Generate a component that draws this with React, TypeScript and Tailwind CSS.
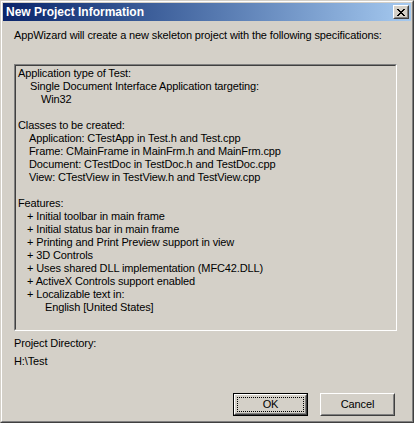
import React from "react";

const font = { fontFamily: '"Liberation Sans", Arial, sans-serif' };

function Btn({ label, isDefault }: { label: string; isDefault?: boolean }) {
  if (isDefault) {
    return (
      <div className="h-[23px] w-[75px] border border-black">
        <div className="h-full w-full border border-t-white border-l-white border-b-[#404040] border-r-[#404040]">
          <div className="flex h-full w-full items-center justify-center border border-t-[#d4d0c8] border-l-[#d4d0c8] border-b-[#808080] border-r-[#808080] p-[1px]">
            <div className="flex h-full w-full items-center justify-center border border-dotted border-black text-[11px] text-black">
              {label}
            </div>
          </div>
        </div>
      </div>
    );
  }
  return (
    <div className="h-[23px] w-[75px] border border-t-white border-l-white border-b-[#404040] border-r-[#404040]">
      <div className="flex h-full w-full items-center justify-center border border-t-[#d4d0c8] border-l-[#d4d0c8] border-b-[#808080] border-r-[#808080] text-[11px] text-black">
        {label}
      </div>
    </div>
  );
}

export default function App() {
  return (
    <div className="h-[423px] w-[414px] bg-[#d4d0c8]" style={font}>
      <div className="h-full w-full border border-t-[#d4d0c8] border-l-[#d4d0c8] border-b-[#404040] border-r-[#404040]">
        <div className="flex h-full w-full flex-col border border-t-white border-l-white border-b-[#808080] border-r-[#808080] p-[1px]">
          {/* title bar */}
          <div className="flex h-[18px] items-center justify-between bg-gradient-to-r from-[#0a246a] to-[#a6caf0] pl-[3px] pr-[2px]">
            <span className="text-[12px] font-bold leading-none text-white">New Project Information</span>
            <div className="h-[14px] w-[16px] border border-t-white border-l-white border-b-[#404040] border-r-[#404040]">
              <div className="flex h-full w-full items-center justify-center border border-t-[#d4d0c8] border-l-[#d4d0c8] border-b-[#808080] border-r-[#808080] bg-[#d4d0c8]">
                <svg width="8" height="7" viewBox="0 0 8 7">
                  <path d="M0 0h2v1h1v1h2V1h1V0h2v1H7v1H6v1H5v1h1v1h1v1h1v1H6V6H5V5H3v1H2v1H0V6h1V5h1V4h1V3H2V2H1V1H0z" fill="#000" />
                </svg>
              </div>
            </div>
          </div>

          {/* body */}
          <div className="flex flex-1 flex-col pl-[11px] pr-[10px] text-[11px] leading-[13px] tracking-[-0.12px] text-black">
            <p className="mt-[8px] h-[13px]">
              AppWizard will create a new skeleton project with the following specifications:
            </p>

            <div className="mt-[22px] h-[267px] w-[383px] border border-t-[#808080] border-l-[#808080] border-b-white border-r-white">
              <div className="h-full w-full border border-t-[#404040] border-l-[#404040] border-b-[#d4d0c8] border-r-[#d4d0c8] px-[2px] pt-[1px]">
                <p>Application type of Test:</p>
                <p className="pl-[12px]">Single Document Interface Application targeting:</p>
                <p className="pl-[23px]">Win32</p>
                <p>&nbsp;</p>
                <p>Classes to be created:</p>
                <p className="pl-[11px]">Application: CTestApp in Test.h and Test.cpp</p>
                <p className="pl-[11px]">Frame: CMainFrame in MainFrm.h and MainFrm.cpp</p>
                <p className="pl-[11px]">Document: CTestDoc in TestDoc.h and TestDoc.cpp</p>
                <p className="pl-[11px]">View: CTestView in TestView.h and TestView.cpp</p>
                <p>&nbsp;</p>
                <p>Features:</p>
                <p className="pl-[9px]">+ Initial toolbar in main frame</p>
                <p className="pl-[9px]">+ Initial status bar in main frame</p>
                <p className="pl-[9px]">+ Printing and Print Preview support in view</p>
                <p className="pl-[9px]">+ 3D Controls</p>
                <p className="pl-[9px]">+ Uses shared DLL implementation (MFC42.DLL)</p>
                <p className="pl-[9px]">+ ActiveX Controls support enabled</p>
                <p className="pl-[9px]">+ Localizable text in:</p>
                <p className="pl-[27px]">English [United States]</p>
              </div>
            </div>

            <p className="mt-[6px]">Project Directory:</p>
            <p className="mt-[5px]">H:\Test</p>

            <div className="mt-[25px] flex justify-end gap-[12px] pr-[6px]">
              <Btn label="OK" isDefault />
              <Btn label="Cancel" />
            </div>
          </div>
        </div>
      </div>
    </div>
  );
}
